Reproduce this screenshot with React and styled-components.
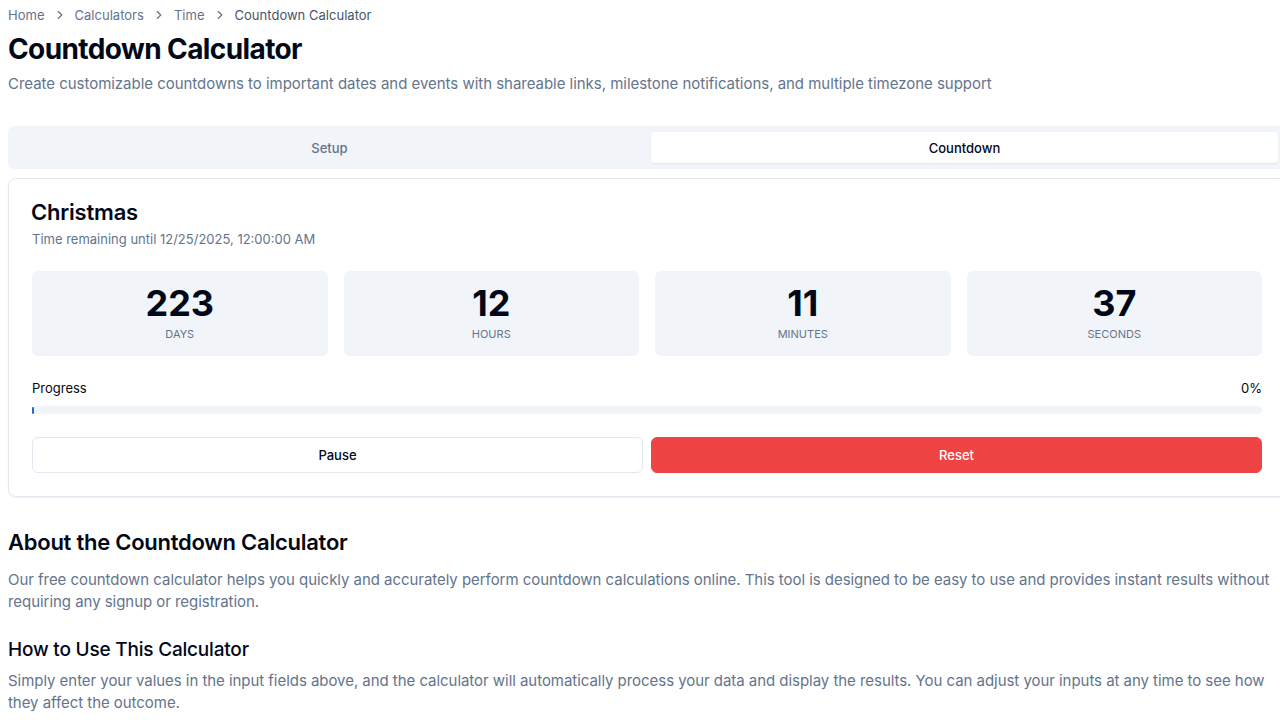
import React from "react";
import styled, { createGlobalStyle } from "styled-components";
import { ChevronRight } from "lucide-react";

const Global = createGlobalStyle`
  html, body { margin: 0; padding: 0; background: #ffffff; overflow-x: hidden; }
  body { font-family: Inter, "Noto Sans", Arial, sans-serif; color: #020817; -webkit-font-smoothing: antialiased; }
  * { box-sizing: border-box; }
`;

const Page = styled.main`
  width: 1278px;
  margin-left: 8px;
  padding-top: 5px;
`;

const Crumbs = styled.nav`
  display: flex;
  align-items: center;
  gap: 8px;
  height: 20px;
  font-size: 13px;
  line-height: 20px;
  color: #64748b;
`;

const Crumb = styled.span`
  color: ${(p) => (p.$current ? "#475569" : "#64748b")};
  letter-spacing: 0.02px;
`;

const Sep = styled(ChevronRight)`
  color: #64748b;
  flex: none;
`;

const Title = styled.h1`
  margin: 6px 0 0;
  font-size: 28px;
  line-height: 36px;
  font-weight: 700;
  letter-spacing: -0.6px;
  color: #020817;
`;

const Lead = styled.p`
  margin: 6px 0 0;
  font-size: 15px;
  line-height: 22px;
  letter-spacing: -0.03px;
  color: #64748b;
`;

const TabList = styled.div`
  margin-top: 31px;
  display: grid;
  grid-template-columns: 1fr 1fr;
  gap: 8px;
  padding: 6px 8px;
  background: #f1f5f9;
  border-radius: 6px;
`;

const Tab = styled.button`
  height: 31px;
  border: none;
  border-radius: 4px;
  font-family: inherit;
  font-size: 13px;
  font-weight: 500;
  color: ${(p) => (p.$active ? "#020817" : "#64748b")};
  background: ${(p) => (p.$active ? "#ffffff" : "transparent")};
  box-shadow: ${(p) => (p.$active ? "0 1px 2px rgba(15, 23, 42, 0.08)" : "none")};
  cursor: pointer;
`;

const Card = styled.section`
  margin-top: 9px;
  border: 1px solid #e2e8f0;
  border-radius: 8px;
  padding: 21px 23px 23px;
  box-shadow: 0 1px 2px rgba(15, 23, 42, 0.05);
  background: #ffffff;
`;

const EventName = styled.h2`
  margin: 0 0 0 -1px;
  font-size: 22px;
  line-height: 24px;
  font-weight: 600;
  letter-spacing: -0.2px;
`;

const Until = styled.p`
  margin: 6px 0 0;
  font-size: 13px;
  line-height: 18px;
  color: #64748b;
`;

const Tiles = styled.div`
  margin-top: 23px;
  display: grid;
  grid-template-columns: repeat(4, 1fr);
  gap: 16px;
`;

const Tile = styled.div`
  background: #f1f5f9;
  border-radius: 6px;
  padding: 12px 12px 14px;
  display: flex;
  flex-direction: column;
  align-items: center;
`;

const Value = styled.div`
  font-size: 36px;
  line-height: 40px;
  font-weight: 700;
  color: #020817;
`;

const Unit = styled.div`
  margin-top: 3px;
  font-size: 11px;
  line-height: 16px;
  color: #64748b;
  text-transform: uppercase;
`;

const ProgressHead = styled.div`
  margin-top: 22px;
  display: flex;
  justify-content: space-between;
  font-size: 13px;
  line-height: 20px;
  color: #020817;
`;

const Track = styled.div`
  margin-top: 8px;
  height: 8px;
  border-radius: 999px;
  background: #f1f5f9;
  display: flex;
  align-items: center;
`;

const Fill = styled.div`
  height: 7px;
  min-width: 2px;
  border-radius: 1px;
  background: #2563eb;
`;

const Actions = styled.div`
  margin-top: 23px;
  display: grid;
  grid-template-columns: 1fr 1fr;
  gap: 8px;
`;

const Button = styled.button`
  height: 36px;
  border-radius: 6px;
  font-family: inherit;
  font-size: 13px;
  font-weight: 500;
  cursor: pointer;
  border: 1px solid ${(p) => (p.$danger ? "#ef4444" : "#e2e8f0")};
  background: ${(p) => (p.$danger ? "#ef4444" : "#ffffff")};
  color: ${(p) => (p.$danger ? "#ffffff" : "#020817")};
`;

const SectionTitle = styled.h2`
  margin: ${(p) => (p.$first ? "30px" : "23px")} 0 0;
  font-size: ${(p) => (p.$first ? "22px" : "19px")};
  line-height: ${(p) => (p.$first ? "30px" : "28px")};
  font-weight: ${(p) => (p.$first ? 600 : 500)};
  letter-spacing: ${(p) => (p.$first ? "-0.25px" : "-0.2px")};
  color: #020817;
`;

const Body = styled.p`
  margin: ${(p) => (p.$tight ? "6px" : "12px")} 0 0;
  font-size: 15px;
  line-height: 22px;
  letter-spacing: -0.045px;
  color: #64748b;
`;

const units = [
  { value: 223, label: "Days" },
  { value: 12, label: "Hours" },
  { value: 11, label: "Minutes" },
  { value: 37, label: "Seconds" },
];

export default function App() {
  const progress = 0;
  return (
    <>
      <Global />
      <Page>
        <Crumbs>
          <Crumb>Home</Crumb>
          <Sep size={14} />
          <Crumb>Calculators</Crumb>
          <Sep size={14} />
          <Crumb>Time</Crumb>
          <Sep size={14} />
          <Crumb $current>Countdown Calculator</Crumb>
        </Crumbs>
        <Title>Countdown Calculator</Title>
        <Lead>
          Create customizable countdowns to important dates and events with shareable links, milestone
          notifications, and multiple timezone support
        </Lead>

        <TabList>
          <Tab>Setup</Tab>
          <Tab $active>Countdown</Tab>
        </TabList>

        <Card>
          <EventName>Christmas</EventName>
          <Until>Time remaining until 12/25/2025, 12:00:00 AM</Until>
          <Tiles>
            {units.map((u) => (
              <Tile key={u.label}>
                <Value>{u.value}</Value>
                <Unit>{u.label}</Unit>
              </Tile>
            ))}
          </Tiles>
          <ProgressHead>
            <span>Progress</span>
            <span>{progress}%</span>
          </ProgressHead>
          <Track>
            <Fill style={{ width: `${progress}%` }} />
          </Track>
          <Actions>
            <Button>Pause</Button>
            <Button $danger>Reset</Button>
          </Actions>
        </Card>

        <SectionTitle $first>About the Countdown Calculator</SectionTitle>
        <Body>
          Our free countdown calculator helps you quickly and accurately perform countdown calculations online.
          This tool is designed to be easy to use and provides instant results without requiring any signup or
          registration.
        </Body>
        <SectionTitle>How to Use This Calculator</SectionTitle>
        <Body $tight>
          Simply enter your values in the input fields above, and the calculator will automatically process your
          data and display the results. You can adjust your inputs at any time to see how they affect the outcome.
        </Body>
      </Page>
    </>
  );
}
